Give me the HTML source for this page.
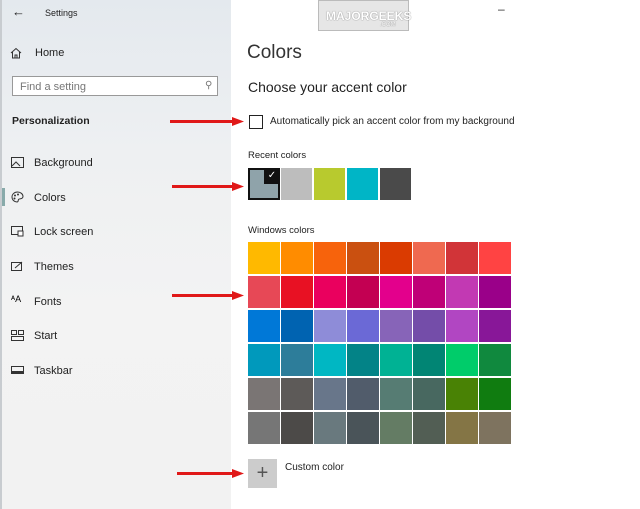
<!DOCTYPE html><html><head><style>
body{margin:0;width:640px;height:509px;overflow:hidden;font-family:"Liberation Sans",sans-serif;background:#fff;position:relative}
.side{position:absolute;left:0;top:0;width:231px;height:509px;background:linear-gradient(180deg,#e4e9ee 0%,#eef0f2 30%,#f3f3f3 60%,#f2f2f2 100%)}
.t{position:absolute;font-size:11px;color:#222;white-space:nowrap}
.n{position:absolute;font-size:11px;color:#222;left:34px}
.ic{position:absolute;left:11px;width:13px;height:11px}
.sw{position:absolute;width:31px;height:32px}
</style></head><body>
<div class="side"></div>
<div style="position:absolute;left:0;top:0;width:2px;height:509px;background:#c8ccd0"></div>
<div class="t" style="left:12px;top:4px;font-size:13px">&#8592;</div>
<div class="t" style="left:45px;top:8px;font-size:9px">Settings</div>
<svg style="position:absolute;left:10px;top:47px" width="12" height="12" viewBox="0 0 12 12"><path d="M1 6 L6 1.5 L11 6 M2.5 5 V11 H9.5 V5 M5 11 V8 H7 V11" fill="none" stroke="#333" stroke-width="1"/></svg>
<div class="t" style="left:35px;top:47px">Home</div>
<div style="position:absolute;left:12px;top:76px;width:206px;height:20px;border:1px solid #999;background:#fff;box-sizing:border-box"></div>
<div class="t" style="left:20px;top:81px;color:#777">Find a setting</div>
<div class="t" style="left:205px;top:80px;color:#777;font-size:10px">&#9906;</div>
<div class="t" style="left:12px;top:115px;font-weight:bold;font-size:10.5px">Personalization</div>
<svg class="ic" style="top:157px" viewBox="0 0 13 11"><rect x="0.5" y="0.5" width="12" height="10" fill="none" stroke="#333"/><path d="M1 9 L5 5 L9 9" fill="none" stroke="#333"/></svg>
<div class="n" style="top:157px">Background</div>
<div style="position:absolute;left:2px;top:188px;width:3px;height:18px;background:#8aa"></div>
<svg class="ic" style="top:191px;height:12px" viewBox="0 0 13 12"><path d="M6.5 1 C3 1 1 3.5 1 6 C1 9 3.5 11 6 11 C7.5 11 7 9.5 7.5 8.5 C8 7.5 12 8.5 12 5.5 C12 3 9.5 1 6.5 1 Z" fill="none" stroke="#333"/><circle cx="4" cy="4.5" r="1" fill="#333"/><circle cx="7" cy="3.5" r="1" fill="#333"/><circle cx="3.5" cy="7.5" r="1" fill="#333"/></svg>
<div class="n" style="top:192px">Colors</div>
<svg class="ic" style="top:226px" viewBox="0 0 13 11"><rect x="0.5" y="0.5" width="11" height="8" fill="none" stroke="#333"/><rect x="7" y="5" width="5" height="5" fill="#fff" stroke="#333"/></svg>
<div class="n" style="top:226px">Lock screen</div>
<svg class="ic" style="top:261px" viewBox="0 0 13 11"><rect x="0.5" y="1.5" width="10" height="8" fill="none" stroke="#333"/><path d="M4 7 L11 1" stroke="#333"/></svg>
<div class="n" style="top:261px">Themes</div>
<div class="ic" style="top:294px;font-size:9px">ᴬA</div>
<div class="n" style="top:296px">Fonts</div>
<svg class="ic" style="top:330px" viewBox="0 0 13 11"><rect x="0.5" y="0.5" width="5" height="4" fill="none" stroke="#333"/><rect x="7.5" y="0.5" width="5" height="4" fill="none" stroke="#333"/><rect x="0.5" y="6.5" width="12" height="4" fill="none" stroke="#333"/></svg>
<div class="n" style="top:330px">Start</div>
<svg class="ic" style="top:365px" viewBox="0 0 13 11"><rect x="0.5" y="1.5" width="12" height="7" fill="none" stroke="#333"/><rect x="1" y="6" width="11" height="2" fill="#333"/></svg>
<div class="n" style="top:365px">Taskbar</div>

<div style="position:absolute;left:318px;top:0;width:91px;height:31px;background:#e6e6e6;border:1px solid #bbb;box-sizing:border-box"></div>
<div class="t" style="left:326px;top:9px;font-size:12px;font-weight:bold;color:#fff;text-shadow:0 0 1px #555">MAJORGEEKS</div>
<div class="t" style="left:380px;top:22px;font-size:6px;color:#fff;text-shadow:0 0 1px #555">.COM</div>
<div class="t" style="left:498px;top:2px;font-size:12px;color:#333">&#8211;</div>

<div class="t" style="left:247px;top:42px;font-size:19px;font-weight:300;color:#333">Colors</div>
<div class="t" style="left:248px;top:79px;font-size:14px">Choose your accent color</div>
<div style="position:absolute;left:249px;top:115px;width:14px;height:14px;border:1px solid #222;box-sizing:border-box"></div>
<div class="t" style="left:270px;top:116px;font-size:10px">Automatically pick an accent color from my background</div>
<div class="t" style="left:248px;top:150px;font-size:9.5px">Recent colors</div>
<div class="sw" style="left:248px;top:168px;background:#8fa3aa;border:2px solid #111;box-sizing:border-box;width:32px"></div>
<div style="position:absolute;left:264px;top:168px;width:16px;height:16px;background:#111;color:#fff;font-size:10px;text-align:center;line-height:15px">&#10003;</div>
<div class="sw" style="left:281px;top:168px;background:#bdbdbd"></div>
<div class="sw" style="left:314px;top:168px;background:#b8ca2e"></div>
<div class="sw" style="left:347px;top:168px;background:#00b5c6"></div>
<div class="sw" style="left:380px;top:168px;background:#4a4a4a"></div>
<div class="t" style="left:248px;top:225px;font-size:9.5px">Windows colors</div>
<div id="g"></div>
<div style="position:absolute;left:248px;top:459px;width:29px;height:29px;background:#ccc;color:#555;font-size:20px;text-align:center;line-height:28px">+</div>
<div class="t" style="left:285px;top:462px;font-size:10px">Custom color</div>

<svg style="position:absolute;left:0;top:0" width="640" height="509">
<g fill="#e01818">
<path d="M170 120 H232 V117 L244 121.5 L232 126 V123 H170 Z"/>
<path d="M172 185 H232 V182 L244 186.5 L232 191 V188 H172 Z"/>
<path d="M172 294 H232 V291 L244 295.5 L232 300 V297 H172 Z"/>
<path d="M177 472 H232 V469 L244 473.5 L232 478 V475 H177 Z"/>
</g></svg>
<script>
var c=[["#ffb900","#ff8c00","#f7630c","#ca5010","#da3b01","#ef6950","#d13438","#ff4343"],
["#e74856","#e81123","#ea005e","#c30052","#e3008c","#bf0077","#c239b3","#9a0089"],
["#0078d7","#0063b1","#8e8cd8","#6b69d6","#8764b8","#744da9","#b146c2","#881798"],
["#0099bc","#2d7d9a","#00b7c3","#038387","#00b294","#018574","#00cc6a","#10893e"],
["#7a7574","#5d5a58","#68768a","#515c6b","#567c73","#486860","#498205","#107c10"],
["#767676","#4c4a48","#69797e","#4a5459","#647c64","#525e54","#847545","#7e735f"]];
var h="";for(var r=0;r<6;r++)for(var k=0;k<8;k++)h+='<div class="sw" style="left:'+(248+k*33)+'px;top:'+(242+r*34)+'px;width:32px;background:'+c[r][k]+'"></div>';
document.getElementById("g").innerHTML=h;
</script>
</body></html>
